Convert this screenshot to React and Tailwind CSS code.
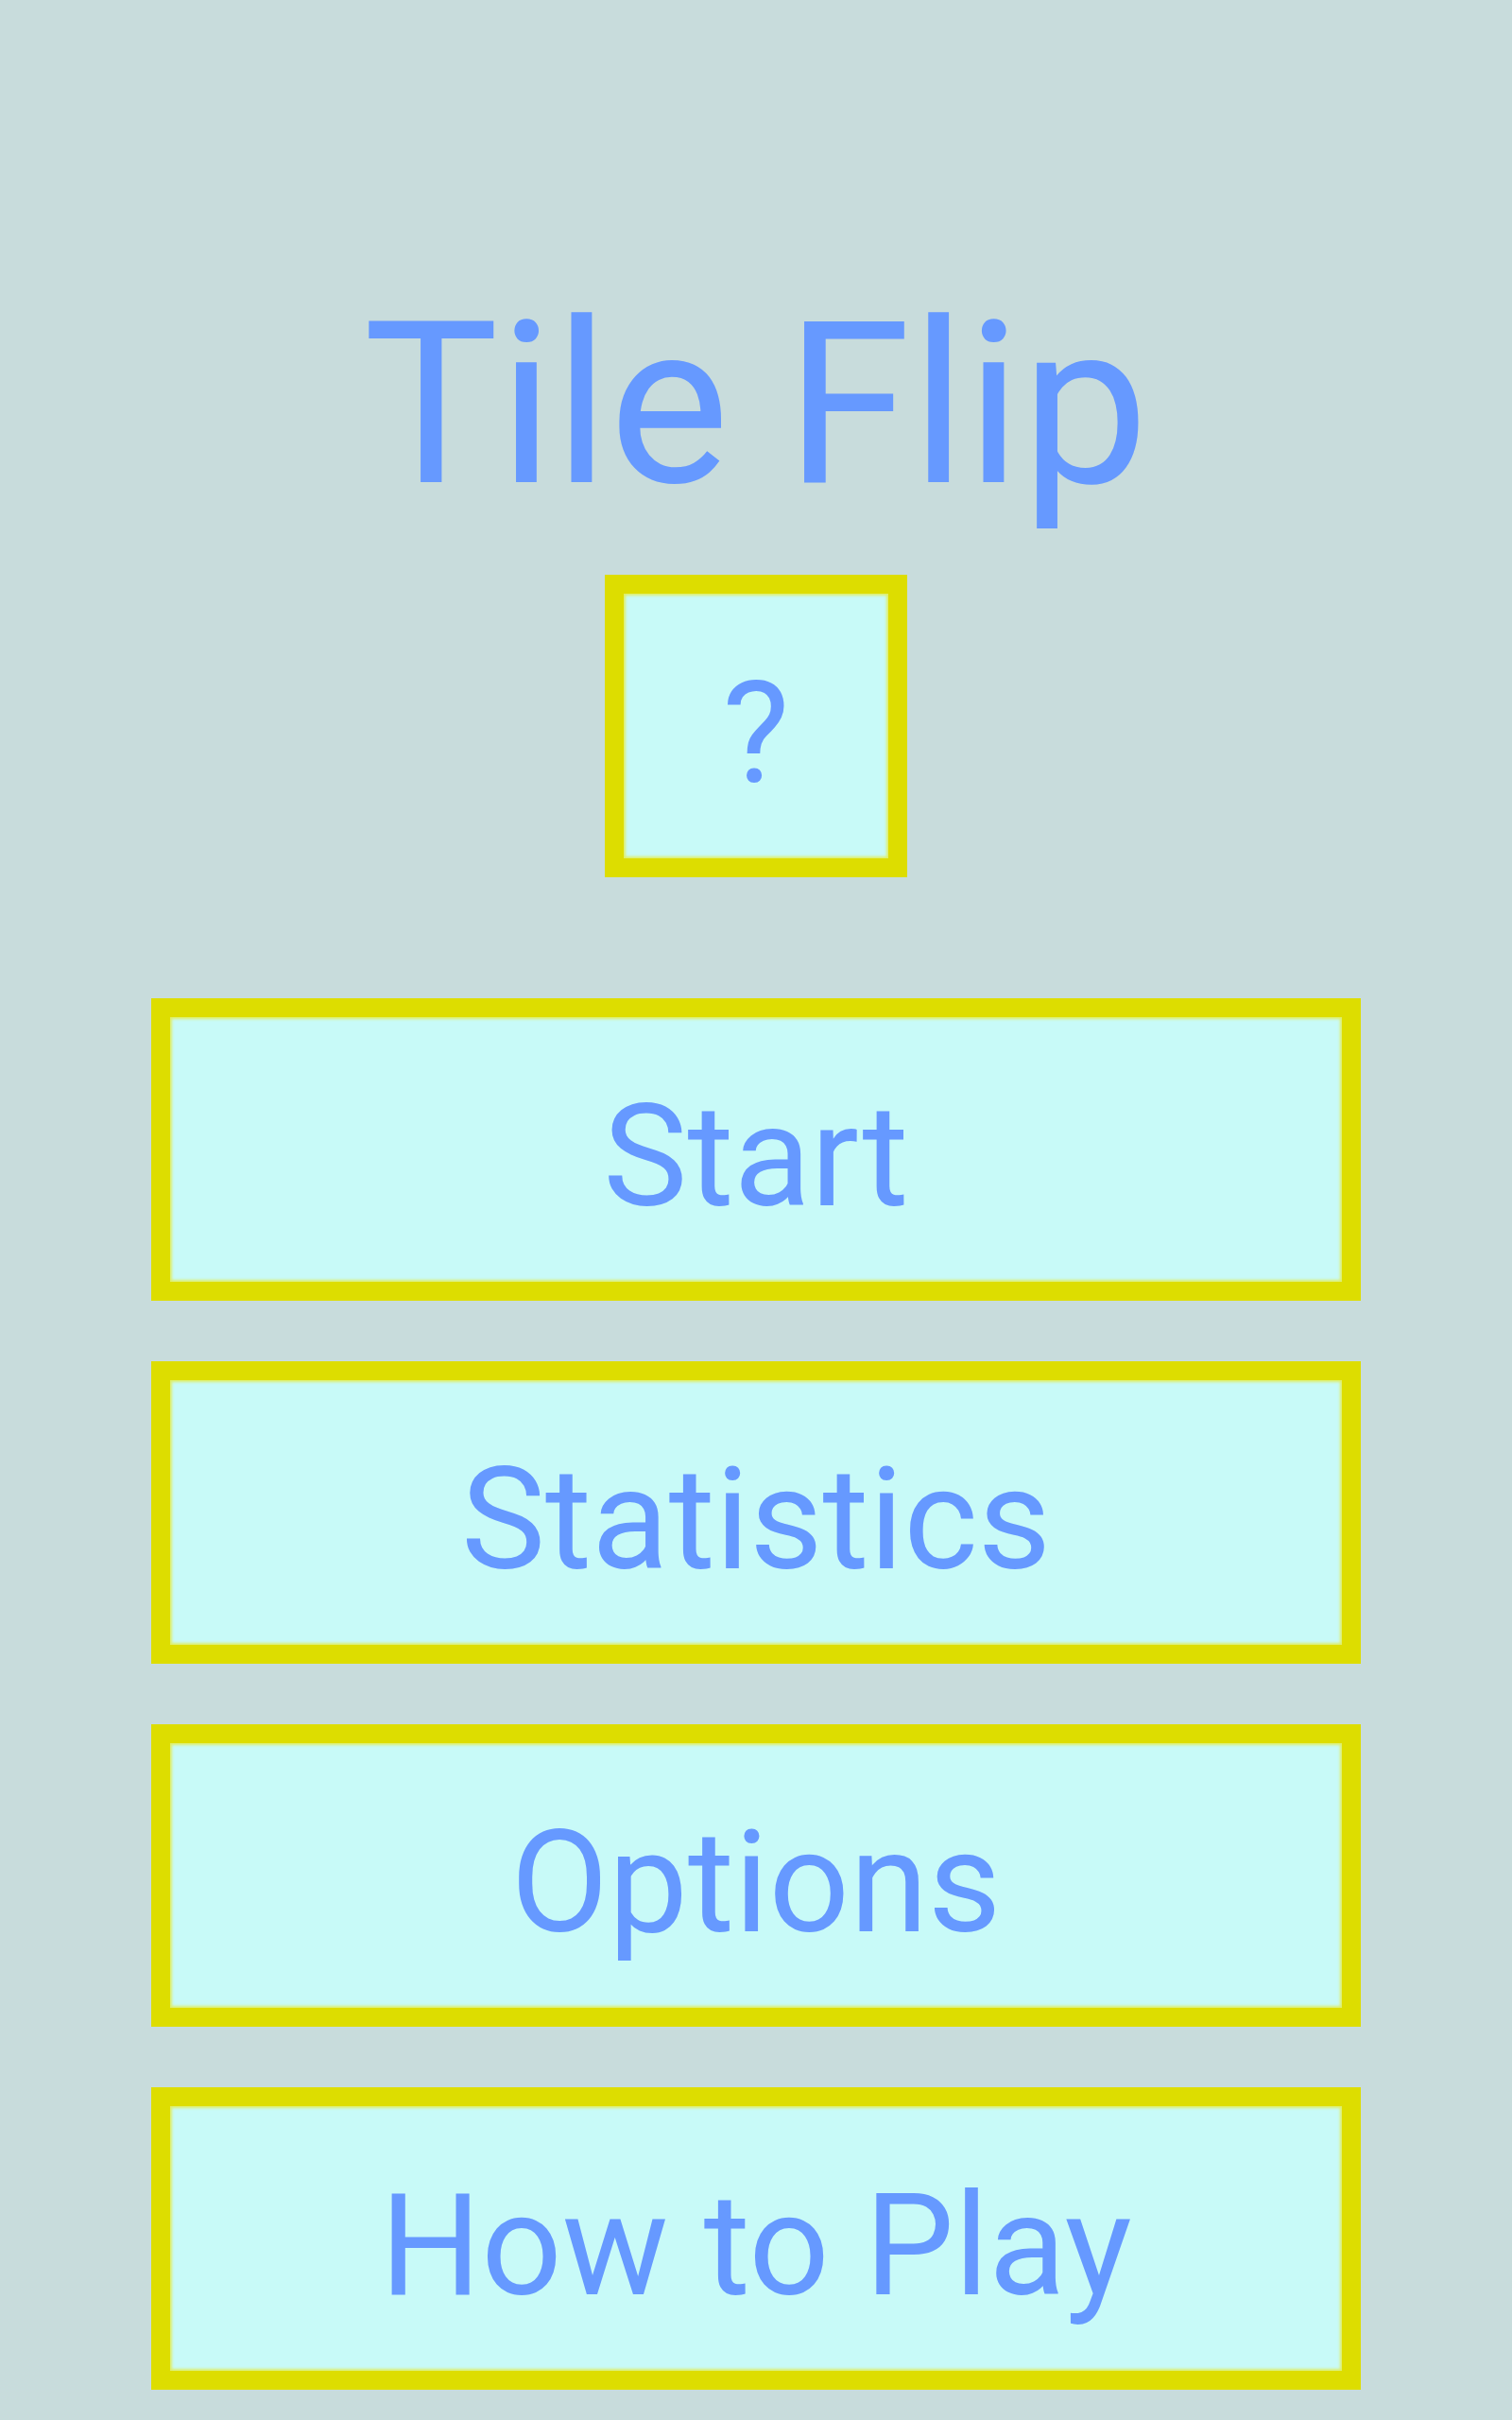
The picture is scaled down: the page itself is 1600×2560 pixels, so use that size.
import React from 'react';

const menu = ['Start', 'Statistics', 'Options', 'How to Play'];

function Tile({ children, className }) {
  return (
    <div className={`border-[20px] border-[#dddd00] bg-[#c8faf8] shadow-[inset_0_0_3px_2px_#dfee66] flex items-center justify-center pt-[16px] text-[#6699ff] text-[150px] leading-none ${className}`}>
      {children}
    </div>
  );
}

export default function App() {
  return (
    <div className="min-h-[2560px] w-full bg-[#c8dcdc] flex flex-col items-center pt-[308px] font-['Roboto',sans-serif]">
      <h1 className="text-[240px] leading-none text-[#6699ff]">Tile Flip</h1>
      <Tile className="w-[320px] h-[320px] mt-[60px]">?</Tile>
      <div className="flex flex-col gap-[64px] mt-[128px] w-[1280px]">
        {menu.map(label => (
          <Tile key={label} className="h-[320px] w-full cursor-pointer">
            {label}
          </Tile>
        ))}
      </div>
    </div>
  );
}
